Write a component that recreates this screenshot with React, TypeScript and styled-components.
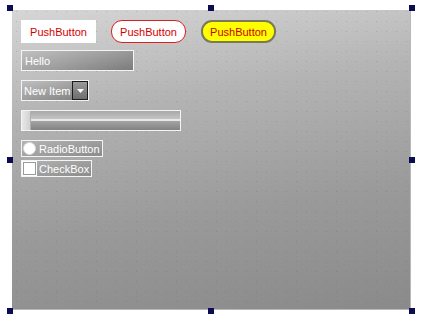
import styled, { createGlobalStyle } from "styled-components"

const GlobalStyle = createGlobalStyle`
  html, body {
    margin: 0;
    padding: 0;
    background: #ffffff;
  }
  body {
    font-family: "Liberation Sans", Arial, sans-serif;
    font-size: 11px;
  }
`

const Page = styled.div`
  width: 423px;
  height: 320px;
  padding: 10px 0 0 12px;
  box-sizing: border-box;
`

const FormFrame = styled.div`
  position: relative;
  width: 399px;
  height: 300px;
  box-sizing: border-box;
  border-right: 1px solid #b8b8b8;
  border-bottom: 1px solid #b8b8b8;
  padding: 0 1px 1px 0;
`

const Form = styled.div`
  width: 398px;
  height: 299px;
  box-sizing: border-box;
  padding: 10px 0 0 9px;
  display: flex;
  flex-direction: column;
  align-items: flex-start;
  background-color: #a8a8a8;
  background-image:
    radial-gradient(circle at 0.5px 0.5px, rgba(70, 70, 70, 0.2) 0.7px, transparent 0.8px),
    linear-gradient(172deg, #d6d6d6 0%, #b4b4b4 30%, #9a9a9a 65%, #8a8a8a 100%);
  background-size: 10px 10px, 100% 100%;
  background-position: 4px 1px, 0 0;
`

const Handle = styled.div<{ $x: number; $y: number }>`
  position: absolute;
  left: ${({ $x }) => $x}px;
  top: ${({ $y }) => $y}px;
  width: 6px;
  height: 6px;
  background: #0c0c52;
`

const ButtonRow = styled.div`
  display: flex;
  gap: 15px;
`

const PushButton = styled.button<{ $kind: "flat" | "pill" | "yellow" }>`
  width: 75px;
  height: 23px;
  box-sizing: border-box;
  padding: 0;
  font-family: "Liberation Sans", Arial, sans-serif;
  font-size: 11px;
  color: ${({ $kind }) => ($kind === "yellow" ? "#c80000" : "#d40000")};
  background: ${({ $kind }) => ($kind === "yellow" ? "#ffff00" : "#ffffff")};
  border: ${({ $kind }) =>
    $kind === "flat"
      ? "none"
      : $kind === "pill"
      ? "1px solid #d82020"
      : "2px solid #7a7a58"};
  border-radius: ${({ $kind }) => ($kind === "flat" ? "0" : "11px")};
`

const Field = styled.div<{ $w: number; $top: number }>`
  width: ${({ $w }) => $w}px;
  height: 21px;
  margin-top: ${({ $top }) => $top}px;
  box-sizing: border-box;
  border: 1px solid #f4f4f4;
  background: linear-gradient(165deg, #c0c0c0 0%, #9c9c9c 55%, #7c7c7c 100%);
  color: #ffffff;
  display: flex;
  align-items: center;
  padding-left: 3px;
`

const Combo = styled(Field)`
  padding-left: 2px;
  justify-content: space-between;
  padding-right: 0;
`

const DropButton = styled.div`
  width: 16px;
  height: 19px;
  box-sizing: border-box;
  border: 1px solid #1c1c1c;
  background: linear-gradient(to bottom, #9a9a9a, #6e6e6e);
  display: flex;
  align-items: center;
  justify-content: center;
`

const Slider = styled.div`
  width: 160px;
  height: 21px;
  margin-top: 9px;
  box-sizing: border-box;
  border: 1px solid #f4f4f4;
  display: flex;
  flex-direction: column;
  position: relative;
`

const GrooveTop = styled.div`
  height: 8px;
  background: linear-gradient(to bottom, #a8a8a8, #c4c4c4);
`

const GrooveLine = styled.div`
  height: 2px;
  background: #e8e8e8;
`

const GrooveBottom = styled.div`
  flex: 1;
  background: linear-gradient(to bottom, #a4a4a4, #828282);
`

const SliderHandle = styled.div`
  position: absolute;
  left: 0;
  top: 0;
  width: 9px;
  height: 19px;
  background: linear-gradient(to right, #e8e8e8, #d2d2d2);
  border-right: 1px solid #b0b0b0;
  box-sizing: border-box;
`

const Option = styled.label<{ $top: number }>`
  margin-top: ${({ $top }) => $top}px;
  height: 17px;
  box-sizing: border-box;
  border: 1px solid #f4f4f4;
  background: linear-gradient(165deg, #b4b4b4 0%, #8c8c8c 100%);
  color: #ffffff;
  display: flex;
  align-items: center;
  gap: 3px;
  padding: 0 2px 0 1px;
  font-size: 11px;
`

const RadioDot = styled.span`
  width: 13px;
  height: 13px;
  border-radius: 50%;
  background: #ffffff;
  box-sizing: border-box;
  border: 1px solid #dcdcdc;
`

const CheckSquare = styled.span`
  width: 13px;
  height: 13px;
  background: #ffffff;
  box-sizing: border-box;
  border: 1px solid #9a9a9a;
  outline: 1px solid #ffffff;
`

const handles = [
  [-5, -5],
  [196, -5],
  [397, -5],
  [-5, 147],
  [397, 147],
  [-5, 298],
  [196, 298],
  [397, 298],
]

export default function App() {
  return (
    <>
      <GlobalStyle />
      <Page>
        <FormFrame>
          <Form>
            <ButtonRow>
              <PushButton $kind="flat">PushButton</PushButton>
              <PushButton $kind="pill">PushButton</PushButton>
              <PushButton $kind="yellow">PushButton</PushButton>
            </ButtonRow>
            <Field $w={113} $top={7}>Hello</Field>
            <Combo $w={68} $top={9}>
              New Item
              <DropButton>
                <svg width="7" height="4" viewBox="0 0 7 4">
                  <path d="M0 0 L7 0 L3.5 4 Z" fill="#ffffff" />
                </svg>
              </DropButton>
            </Combo>
            <Slider>
              <GrooveTop />
              <GrooveLine />
              <GrooveBottom />
              <SliderHandle />
            </Slider>
            <Option $top={9}>
              <RadioDot />
              RadioButton
            </Option>
            <Option $top={3}>
              <CheckSquare />
              CheckBox
            </Option>
          </Form>
          {handles.map(([x, y], i) => (
            <Handle key={i} $x={x} $y={y} />
          ))}
        </FormFrame>
      </Page>
    </>
  )
}
